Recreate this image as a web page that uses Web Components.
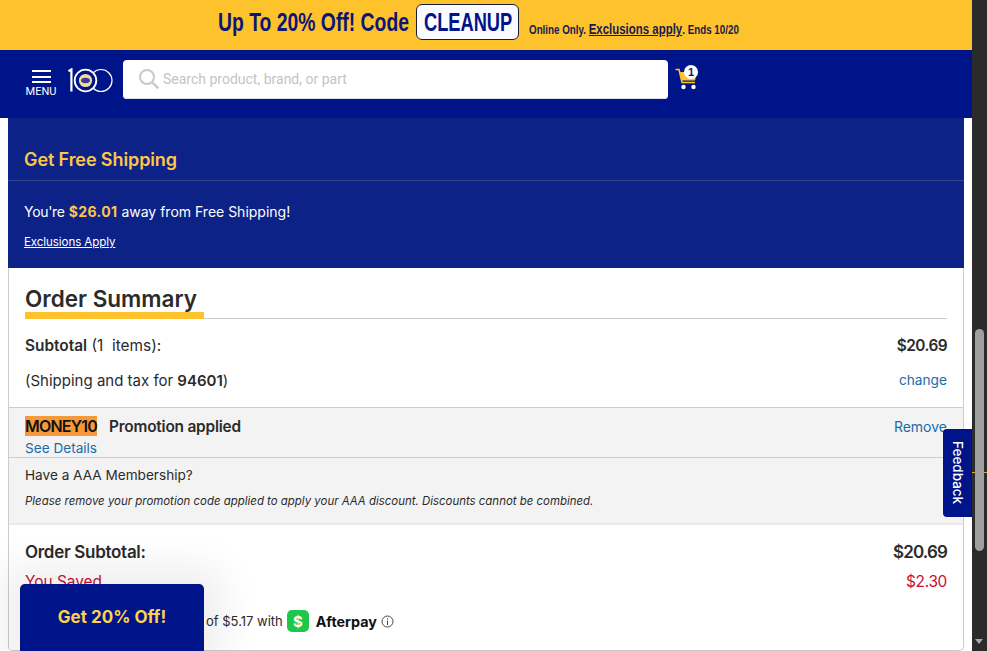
<!DOCTYPE html>
<html lang="en"><head><meta charset="utf-8"><title>Order Summary</title>
<style>
html,body{margin:0;padding:0;height:651px;overflow:hidden;background:#fff}
body{display:flex;font-family:Inter,"Liberation Sans",sans-serif;color:#2b2b2b}
#page{width:972px;height:651px;display:flex;flex-direction:column;position:relative;overflow:hidden}
</style></head><body>
<div id="page">
<promo-banner></promo-banner>
<site-nav></site-nav>
<checkout-content>
  <shipping-panel></shipping-panel>
  <order-summary></order-summary>
</checkout-content>
<offer-tab></offer-tab>
<feedback-tab></feedback-tab>
</div>
<fake-scrollbar></fake-scrollbar>
<script>
function def(name,html){customElements.define(name,class extends HTMLElement{constructor(){super();this.attachShadow({mode:'open'}).innerHTML=html}})}
def('promo-banner',`<style>
:host{display:flex;height:50px;background:#fec22d;align-items:center;justify-content:center;color:#0d1675;font-family:"Liberation Sans",sans-serif;flex:none;box-sizing:border-box;padding-right:15px}
.box{display:block;white-space:nowrap;flex:none}
.sq{display:inline-block;transform-origin:0 50%}
.big{width:192px;font-size:25px;font-weight:700;margin-top:-6px}
.big .sq{transform:scaleX(.774)}
.code{display:flex;align-items:center;width:103px;height:36px;box-sizing:border-box;border:1px solid #1c1c3c;border-radius:6px;background:#fbfcff;font-size:25px;font-weight:700;margin:-6px 10px 0 6px;padding-left:7px;color:#001489}
.code .sq{transform:scaleX(.73)}
.small{width:210px;font-size:12px;font-weight:700;color:#1a1a4c;margin-top:8px}
.small .sq{transform:scaleX(.817)}
.small u{font-size:14px}
</style><span class="box big"><span class="sq">Up To 20% Off! Code</span></span><span class="code"><span class="sq">CLEANUP</span></span><span class="box small"><span class="sq">Online Only. <u>Exclusions apply</u>. Ends 10/20</span></span>`);
def('site-nav',`<style>
:host{display:flex;height:68px;background:#001489;align-items:flex-start;flex:none;box-sizing:border-box;padding:10px 0 0 25px;color:#fff}
.menu{width:32px;display:flex;flex-direction:column;align-items:center;padding-top:10px;font:11px/12px Roboto,sans-serif}
.menu i{display:block;width:19px;height:2px;background:#fff;margin-bottom:3.5px}
.menu span{margin-top:-1px}
.logo{margin:8px 0 0 11px;flex:none}
.search{width:545px;height:39px;background:#fff;border-radius:4px;margin-left:10px;box-sizing:border-box;display:flex;align-items:center;padding:0 0 1px 16px;color:#c4c4c4;font:14px Roboto,sans-serif;gap:4px;box-shadow:inset 0 -1px 0 #dfe2ee}
.cart{position:relative;margin:6px 0 0 7px;width:26px;height:26px}
.cart b{position:absolute;left:9px;top:-1px;width:14px;height:14px;border-radius:50%;background:#fff;color:#001489;font:700 11px/14px "Liberation Sans",sans-serif;text-align:center}
</style>
<div class="menu"><i></i><i></i><i></i><span>MENU</span></div>
<svg class="logo" width="45" height="25" viewBox="0 0 45 25" aria-hidden="true">
<path d="M.5 3.2 L3.4 1.4 V23.5" fill="none" stroke="#fff" stroke-width="2.2"/>
<circle cx="33" cy="12.5" r="11" fill="none" stroke="#fff" stroke-width="1.2"/>
<circle cx="17.5" cy="12.5" r="10.8" fill="#001489" stroke="#fff" stroke-width="1.8"/>
<circle cx="17.5" cy="12.5" r="6.6" fill="#f4dc94"/>
<ellipse cx="17.5" cy="12.5" rx="4.4" ry="2.8" fill="#3a3aa0"/>
</svg>
<div class="search"><svg width="20" height="20" viewBox="0 0 20 20" fill="none" stroke="#c9c9c9" stroke-width="2" aria-hidden="true"><circle cx="8" cy="8" r="7"/><path d="M13 13 L19.4 19.4" stroke-width="2.4"/></svg><span>Search product, brand, or part</span></div>
<div class="cart"><svg width="24" height="24" viewBox="0 0 24 24" aria-hidden="true" style="margin-top:1px"><path d="M0.5 2.5 H4 L7 15.5 H20" fill="none" stroke="#fec22d" stroke-width="1.6"/><path d="M5 5 H22 L20 13.5 H7 Z" fill="#fec22d"/><circle cx="8.5" cy="20" r="2.2" fill="#fff"/><circle cx="18.5" cy="20" r="2.2" fill="#fff"/></svg><b>1</b></div>`);
def('checkout-content',`<style>
:host{display:flex;flex-direction:column;flex:1;min-height:0;padding:0 8px;overflow:hidden}
</style><slot></slot>`);
def('shipping-panel',`<style>
:host{display:block;height:150px;background:#0c2287;color:#fff;flex:none;box-sizing:border-box}
h2{margin:0;height:63px;box-sizing:border-box;padding:30px 16px 0;font:600 18px/24px Inter,sans-serif;letter-spacing:-.1px;color:#fec74a;border-bottom:1px solid #33468f}
p{margin:0;padding:21px 16px 0;font:14px/20px Inter,sans-serif}
p span{letter-spacing:-.3px}
b{color:#fec74a;font-weight:700;letter-spacing:.4px}
a{display:block;margin:12px 16px 0;font:11.6px/16px Inter,sans-serif;color:#fff;text-decoration:underline;letter-spacing:-.1px}
</style><h2>Get Free Shipping</h2><p><span>You're</span> <b>$26.01</b> away from Free Shipping!</p><a>Exclusions Apply</a>`);
def('order-summary',`<style>
:host{display:block;height:383px;flex:none;box-sizing:border-box;background:#fff;border:1px solid #ccc;border-top:none;border-radius:0 0 5px 5px;font-family:Inter,sans-serif;color:#2b2b2b}
.head{margin:0 16px;height:51px;border-bottom:1px solid #ccc;box-sizing:border-box;position:relative}
h2{margin:0;padding-top:16px;font:600 22.5px/30px Inter,sans-serif;white-space:nowrap;position:relative;z-index:1}
.head i{position:absolute;left:0;bottom:-1px;width:179px;height:7px;background:#fec22d}
.row{display:flex;justify-content:space-between;align-items:center;margin:0 16px}
.r1{height:35px;margin-top:9px;font-size:15.4px}
.r2{height:35px;font-size:15px}
b{font-weight:600}
a{color:#1a6ca8}
.r2 a{font-size:13.7px;margin-top:-2px}
.price{font-weight:600;font-size:15.4px;letter-spacing:-.55px}
.promo{margin-top:9px;background:#f3f3f3;border-top:1px solid #ccc;border-bottom:2px solid #e9e9e9;height:118px;box-sizing:border-box}
.code{display:flex;justify-content:space-between;align-items:center;padding:6px 16px 0;height:30px;box-sizing:border-box}
mark{background:#f5993a;color:#111;font-weight:600;font-size:16px;line-height:19px;letter-spacing:-.8px}
.code b{font-size:15.4px;margin-left:12px;letter-spacing:-.2px}
.details{display:block;height:18px;padding:1px 16px 0;font-size:13.6px;line-height:19px;border-bottom:1px solid #ccc}
.aaa{padding:8px 16px 0;font-size:13.6px;line-height:18px}
.aaa em{display:block;font-size:11.44px;line-height:16px;margin-top:9px}
.t1{height:30px;margin-top:12px;font-size:17px;font-weight:600;letter-spacing:-.3px}
.t1 b{font-size:17px;letter-spacing:-.85px}
.saved{height:28px;color:#c8102e;font-size:15.4px}
.saved span+span{letter-spacing:-.3px}
.after{display:flex;align-items:center;height:30px;margin:11px 0 0 197px;font-size:13px;white-space:nowrap}
.after svg{margin:0 7px 0 4px}
.after b{font-weight:700;font-size:14.3px;color:#111;margin:0 4px 0 0}
</style>
<div class="head"><h2>Order Summary</h2><i></i></div>
<div class="row r1"><span><b>Subtotal</b> (1&nbsp; items):</span><span class="price">$20.69</span></div>
<div class="row r2"><span>(Shipping and tax for <b>94601</b>)</span><a>change</a></div>
<div class="promo">
 <div class="code"><span><mark>MONEY10</mark><b>Promotion applied</b></span><a style="font-size:14px">Remove</a></div>
 <a class="details">See Details</a>
 <div class="aaa">Have a AAA Membership?<em>Please remove your promotion code applied to apply your AAA discount. Discounts cannot be combined.</em></div>
</div>
<div class="row t1"><span>Order Subtotal:</span><b>$20.69</b></div>
<div class="row saved"><span>You Saved</span><span>$2.30</span></div>
<div class="after"><span>of $5.17 with</span><svg width="22" height="22" viewBox="0 0 22 22" aria-hidden="true"><rect width="22" height="22" rx="5" fill="#1ec64a"/><text x="11" y="16.5" text-anchor="middle" fill="#fff" font-family="Inter,sans-serif" font-weight="700" font-size="15">$</text></svg><b>Afterpay</b><svg style="margin:0" width="13" height="13" viewBox="0 0 13 13" fill="none" stroke="#444" aria-hidden="true"><circle cx="6.5" cy="6.5" r="5.5"/><path d="M6.5 5.6V10M6.5 3.2V4.4"/></svg></div>`);
def('offer-tab',`<style>
:host{position:absolute;left:20px;bottom:0;width:184px;height:67px;background:#001489;border-radius:5px 5px 0 0;display:flex;justify-content:center;padding-top:21px;box-sizing:border-box;color:#fed24a;font:700 17px/24px Inter,sans-serif;box-shadow:0 0 40px 18px rgba(0,0,0,.07)}
</style>Get 20% Off!`);
def('feedback-tab',`<style>
:host{position:absolute;right:0;top:429px;width:29px;height:88px;background:#001489;border-radius:4px 0 0 4px;display:flex;align-items:center;justify-content:center;color:#fff;font:500 13.5px/16px Inter,sans-serif}
span{writing-mode:vertical-rl}
</style><span>Feedback</span>`);
def('fake-scrollbar',`<style>
:host{display:block;width:15px;height:651px;background:#2b2b2b;position:relative;flex:none}
.thumb{position:absolute;left:3px;top:329px;width:9px;height:222px;background:#9f9f9f;border-radius:5px}
.mark{position:absolute;left:0;top:472px;width:15px;height:1px;background:#d8a92a}
.down{position:absolute;left:3px;bottom:7px;width:0;height:0;border:4.5px solid transparent;border-top:5px solid #a8a8a8;border-bottom:0}
</style><div class="mark"></div><div class="thumb"></div><div class="down"></div>`);
</script>
</body></html>
